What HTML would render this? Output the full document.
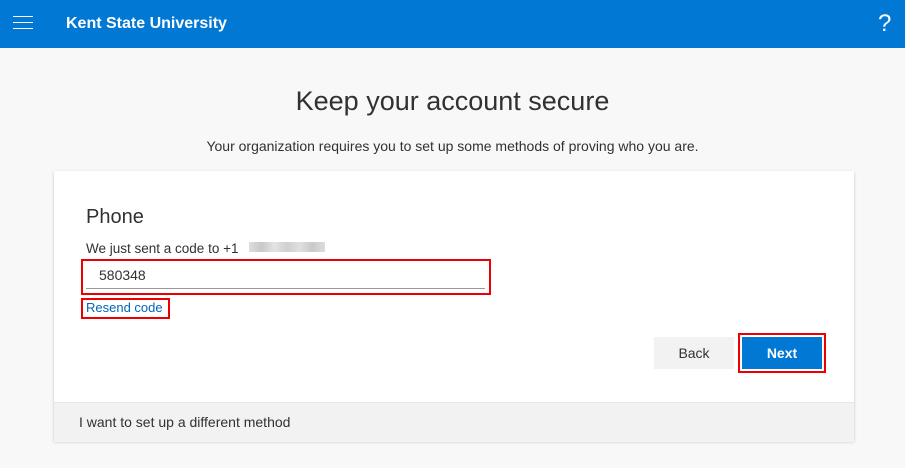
<!DOCTYPE html>
<html><head><style>
body{margin:0;width:905px;height:468px;background:#f8f8f8;font-family:"Liberation Sans",sans-serif;position:relative;overflow:hidden;color:#323130}
.hdr{position:absolute;left:0;top:0;width:905px;height:48px;background:#0078d4;color:#fff}
.abs{position:absolute}
</style></head><body>
<div class="hdr">
 <div class="abs" style="left:13px;top:16px;width:20px;height:1px;background:#fff"></div>
 <div class="abs" style="left:13px;top:22px;width:20px;height:1px;background:#fff"></div>
 <div class="abs" style="left:13px;top:28px;width:20px;height:1px;background:#fff"></div>
 <div class="abs" style="left:66px;top:15px;font-size:16px;font-weight:bold">Kent State University</div>
 <div class="abs" style="left:878px;top:10px;font-size:24px;font-weight:300">?</div>
</div>
<div class="abs" style="left:0;width:905px;top:86px;text-align:center;font-size:27px;color:#323130">Keep your account secure</div>
<div class="abs" style="left:0;width:905px;top:138px;text-align:center;font-size:14px">Your organization requires you to set up some methods of proving who you are.</div>
<div class="abs" style="left:54px;top:171px;width:800px;height:270px;background:#fff;box-shadow:0 1px 3px rgba(0,0,0,.2)">
 <div class="abs" style="left:0;top:231px;width:800px;height:39px;background:#f2f2f2;border-top:1px solid #e5e5e5"></div>
 <div class="abs" style="left:25px;top:243px;font-size:14px">I want to set up a different method</div>
</div>
<div class="abs" style="left:86px;top:206px;font-size:20px">Phone</div>
<div class="abs" style="left:86px;top:241px;font-size:13.5px">We just sent a code to +1</div>
<div class="abs" style="left:249px;top:242px;width:76px;height:10px;background:linear-gradient(90deg,#ddd,#c8c8c8,#e4e4e4,#cfcfcf,#e0e0e0,#c9c9c9,#ddd)"></div>
<div class="abs" style="left:81px;top:259px;width:406px;height:32px;border:2px solid #e00"></div>
<div class="abs" style="left:86px;top:288px;width:399px;height:1px;background:#999"></div>
<div class="abs" style="left:99px;top:267px;font-size:14px">580348</div>
<div class="abs" style="left:81px;top:298px;width:85px;height:17px;border:2px solid #e00"></div>
<div class="abs" style="left:86px;top:300px;font-size:13px;color:#0067b8">Resend code</div>
<div class="abs" style="left:654px;top:337px;width:80px;height:32px;background:#f2f2f2;text-align:center;line-height:32px;font-size:14px">Back</div>
<div class="abs" style="left:738px;top:333px;width:84px;height:36px;border:2px solid #e00"></div>
<div class="abs" style="left:742px;top:337px;width:80px;height:32px;background:#0078d4;color:#fff;text-align:center;line-height:32px;font-size:14px;font-weight:bold">Next</div>
</body></html>
